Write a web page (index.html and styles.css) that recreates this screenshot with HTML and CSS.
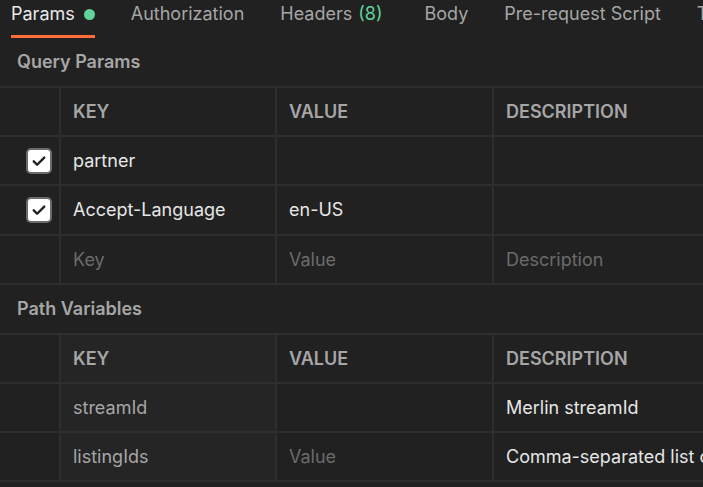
FILE: index.html
```html
<!DOCTYPE html>
<html>
<head>
<meta charset="utf-8">
<link rel="stylesheet" href="styles.css">
</head>
<body>
<div class="tabs">
  <div class="tab active">Params <span class="dot"></span></div>
  <div class="tab">Authorization</div>
  <div class="tab">Headers <span class="count">(8)</span></div>
  <div class="tab">Body</div>
  <div class="tab">Pre-request Script</div>
  <div class="tab">Tests</div>
</div>

<div class="section-title">Query Params</div>
<div class="table">
  <div class="row head">
    <div class="cell chk"></div>
    <div class="cell">KEY</div>
    <div class="cell">VALUE</div>
    <div class="cell">DESCRIPTION</div>
  </div>
  <div class="row">
    <div class="cell chk"><span class="box"><svg viewBox="0 0 24 24" width="18" height="18"><path d="M5 12.5l4.5 4.5L19 7.5" fill="none" stroke="#222" stroke-width="3.2" stroke-linecap="round" stroke-linejoin="round"/></svg></span></div>
    <div class="cell val">partner</div>
    <div class="cell val"></div>
    <div class="cell val"></div>
  </div>
  <div class="row">
    <div class="cell chk"><span class="box"><svg viewBox="0 0 24 24" width="18" height="18"><path d="M5 12.5l4.5 4.5L19 7.5" fill="none" stroke="#222" stroke-width="3.2" stroke-linecap="round" stroke-linejoin="round"/></svg></span></div>
    <div class="cell val">Accept-Language</div>
    <div class="cell val">en-US</div>
    <div class="cell val"></div>
  </div>
  <div class="row">
    <div class="cell chk"></div>
    <div class="cell ph">Key</div>
    <div class="cell ph">Value</div>
    <div class="cell ph">Description</div>
  </div>
</div>

<div class="section-title">Path Variables</div>
<div class="table path">
  <div class="row head">
    <div class="cell chk"></div>
    <div class="cell keycol">KEY</div>
    <div class="cell">VALUE</div>
    <div class="cell">DESCRIPTION</div>
  </div>
  <div class="row">
    <div class="cell chk"></div>
    <div class="cell keycol ro">streamId</div>
    <div class="cell val"></div>
    <div class="cell val">Merlin streamId</div>
  </div>
  <div class="row">
    <div class="cell chk"></div>
    <div class="cell keycol ro">listingIds</div>
    <div class="cell ph">Value</div>
    <div class="cell val">Comma-separated list of listing ids</div>
  </div>
</div>
</body>
</html>
```

FILE: styles.css
```css
html, body {
  margin: 0;
  padding: 0;
  background: #212121;
  overflow: hidden;
}
body {
  font-family: Inter, "Noto Sans", sans-serif;
  font-size: 18px;
  color: #e6e6e6;
  width: 703px;
  height: 487px;
}
.tabs {
  display: flex;
  height: 38px;
  padding-left: 11px;
  white-space: nowrap;
  overflow: hidden;
}
.tab {
  color: #a6a6a6;
  margin-right: 36px;
  line-height: 28px;
  height: 38px;
  box-sizing: border-box;
  display: flex;
  align-items: flex-start;
  flex-shrink: 0;
}
.tab.active {
  color: #e8e8e8;
  border-bottom: 3px solid #ff6c37;
}
.dot {
  display: inline-block;
  width: 11px;
  height: 11px;
  border-radius: 50%;
  background: #5fd39a;
  margin: 9px 0 0 9px;
}
.count {
  color: #5fd39a;
  margin-left: 6px;
  margin-right: 6px;
}
.section-title {
  height: 48px;
  line-height: 48px;
  padding-left: 17px;
  font-weight: 600;
  color: #a6a6a6;
}
.table {
  border-top: 2px solid #2e2e2e;
  border-bottom: 2px solid #2e2e2e;
}
.row {
  display: grid;
  grid-template-columns: 59px 214px 215px 1fr;
  column-gap: 2px;
  background: #2e2e2e;
  border-bottom: 2px solid #2e2e2e;
}
.row:last-child { border-bottom: none; }
.cell {
  background: #212121;
  height: 47.2px;
  display: flex;
  align-items: center;
  padding-left: 12px;
  white-space: nowrap;
  overflow: hidden;
}
.head .cell {
  font-weight: 600;
  color: #a6a6a6;
}
.chk {
  padding-left: 0;
  justify-content: flex-end;
  padding-right: 7px;
}
.box {
  width: 22px;
  height: 22px;
  background: #ffffff;
  border: 2px solid #6b6b6b;
  border-radius: 5px;
  display: flex;
  align-items: center;
  justify-content: center;
}
.ph { color: #6b6b6b; }
.ro { color: #a6a6a6; }
.path .keycol { background: #252525; }
```
